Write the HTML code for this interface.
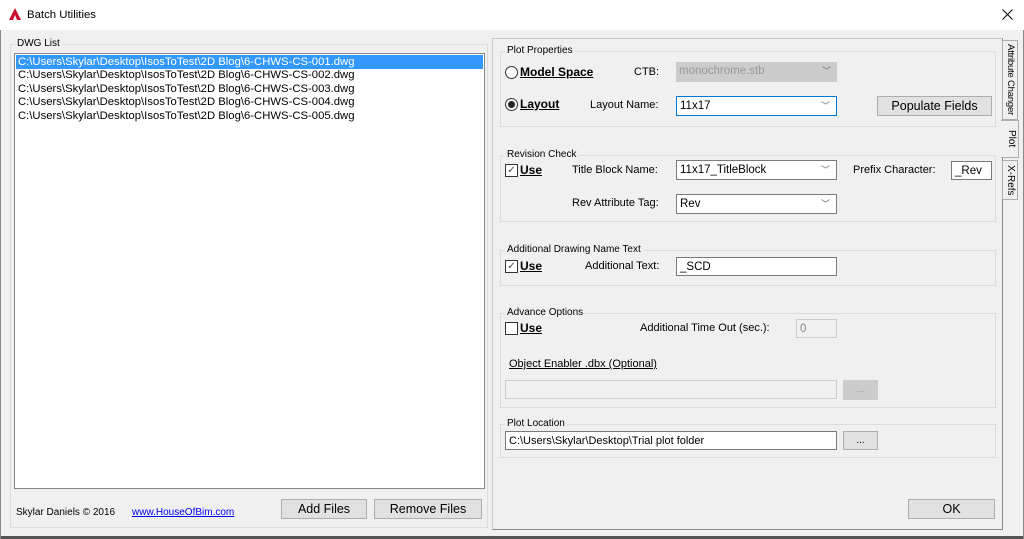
<!DOCTYPE html><html><head><style>
*{box-sizing:border-box}
body{margin:0;width:1024px;height:539px;overflow:hidden;background:#f0f0f0;font-family:"Liberation Sans",sans-serif;font-size:11px;color:#000;position:relative}
.a{position:absolute;white-space:nowrap}
.grp{position:absolute;border:1px solid #dcdcdc}
.gl{position:absolute;background:#f0f0f0;padding:0 2px;font-size:10px;top:-7px;left:4px;white-space:nowrap}
.box{position:absolute;background:#fff;border:1px solid #7a7a7a;padding:1px 3px;line-height:16px;font-size:11.5px;white-space:nowrap}
.dis{background:#f0f0f0;border-color:#ccc;color:#888}
.btn{position:absolute;background:#e1e1e1;border:1px solid #adadad;text-align:center;font-size:12.5px;line-height:18px}
.ch{position:absolute;right:6px;top:1px;font-size:9px;color:#666}
.cb{position:absolute;width:13px;height:13px;border:1px solid #333;background:#fff;font-size:10px;line-height:11px;text-align:center;color:#444}
.rd{position:absolute;width:13px;height:13px;border:1px solid #333;border-radius:50%;background:#fff}
b{text-decoration:underline;font-size:12px}
.tab{position:absolute;writing-mode:vertical-rl;border:1px solid #adadad;background:#f0f0f0;font-size:10px;text-align:center;white-space:nowrap;line-height:14px;overflow:hidden}
</style></head><body>
<div class="a" style="left:0;top:0;width:1024px;height:30px;background:#fff"></div>
<svg class="a" style="left:8px;top:7px" width="14" height="14"><polygon points="7,1 13,13 9,13 7,8 5,13 1,13" fill="#c8102e"/></svg>
<div class="a" style="left:27px;top:9px;font-size:11.4px">Batch Utilities</div>
<svg class="a" style="left:1002px;top:9px" width="11" height="11"><path d="M0.5 0.5L10.5 10.5M10.5 0.5L0.5 10.5" stroke="#111" stroke-width="1.1"/></svg>
<div class="a" style="left:0;top:536px;width:1024px;height:3px;background:#555"></div>
<div class="a" style="left:0;top:30px;width:1px;height:509px;background:#888"></div>
<div class="a" style="left:1023px;top:30px;width:1px;height:509px;background:#888"></div>

<div class="grp" style="left:10px;top:44px;width:478px;height:484px"><span class="gl">DWG List</span></div>
<div class="a" style="left:14px;top:53px;width:471px;height:436px;background:#fff;border:1px solid #828790"></div>
<div class="a" style="left:16px;top:55px;width:467px;height:14px;background:#3399ff"></div>
<div class="a" style="left:18px;top:55.5px;line-height:13.6px;font-size:11.3px"><span style="color:#fff">C:\Users\Skylar\Desktop\IsosToTest\2D Blog\6-CHWS-CS-001.dwg</span><br>C:\Users\Skylar\Desktop\IsosToTest\2D Blog\6-CHWS-CS-002.dwg<br>C:\Users\Skylar\Desktop\IsosToTest\2D Blog\6-CHWS-CS-003.dwg<br>C:\Users\Skylar\Desktop\IsosToTest\2D Blog\6-CHWS-CS-004.dwg<br>C:\Users\Skylar\Desktop\IsosToTest\2D Blog\6-CHWS-CS-005.dwg</div>
<div class="a" style="left:16px;top:507px;font-size:10px">Skylar Daniels © 2016</div>
<div class="a" style="left:132px;top:507px;font-size:10px;color:#0000ee;text-decoration:underline">www.HouseOfBim.com</div>
<div class="btn" style="left:281px;top:499px;width:86px;height:20px">Add Files</div>
<div class="btn" style="left:374px;top:499px;width:108px;height:20px">Remove Files</div>

<div class="a" style="left:492px;top:38px;width:511px;height:492px;border:1px solid #c8c8c8;border-right-color:#888;border-bottom-color:#888"></div>
<div class="tab" style="left:1002px;top:40px;width:16px;height:80px;font-size:9.5px;letter-spacing:-0.2px">Attribute Changer</div>
<div class="tab" style="left:1001px;top:120px;width:18px;height:38px;border-left:none">Plot</div>
<div class="tab" style="left:1002px;top:160px;width:16px;height:40px">X-Refs</div>

<div class="grp" style="left:500px;top:51px;width:496px;height:76px"><span class="gl">Plot Properties</span></div>
<div class="rd" style="left:505px;top:66px"></div>
<div class="a" style="left:520px;top:65px"><b>Model Space</b></div>
<div class="a" style="left:634px;top:66px">CTB:</div>
<div class="box dis" style="left:676px;top:62px;width:161px;height:20px;border:none;background:#ccc;color:#999">monochrome.stb<span class="ch">﹀</span></div>
<div class="rd" style="left:505px;top:98px;background:radial-gradient(#222 3px,#fff 4px)"></div>
<div class="a" style="left:520px;top:97px"><b>Layout</b></div>
<div class="a" style="left:590px;top:99px">Layout Name:</div>
<div class="box" style="left:676px;top:96px;width:161px;height:20px;border-color:#0078d7">11x17<span class="ch">﹀</span></div>
<div class="btn" style="left:877px;top:96px;width:115px;height:20px">Populate Fields</div>

<div class="grp" style="left:500px;top:155px;width:496px;height:67px"><span class="gl">Revision Check</span></div>
<div class="cb" style="left:505px;top:164px">✓</div>
<div class="a" style="left:520px;top:163px"><b>Use</b></div>
<div class="a" style="left:572px;top:164px">Title Block Name:</div>
<div class="box" style="left:676px;top:160px;width:161px;height:20px">11x17_TitleBlock<span class="ch">﹀</span></div>
<div class="a" style="left:853px;top:164px">Prefix Character:</div>
<div class="box" style="left:951px;top:161px;width:41px;height:19px">_Rev</div>
<div class="a" style="left:572px;top:197px">Rev Attribute Tag:</div>
<div class="box" style="left:676px;top:194px;width:161px;height:20px">Rev<span class="ch">﹀</span></div>

<div class="grp" style="left:500px;top:250px;width:496px;height:36px"><span class="gl">Additional Drawing Name Text</span></div>
<div class="cb" style="left:505px;top:260px">✓</div>
<div class="a" style="left:520px;top:259px"><b>Use</b></div>
<div class="a" style="left:585px;top:260px">Additional Text:</div>
<div class="box" style="left:676px;top:257px;width:161px;height:19px">_SCD</div>

<div class="grp" style="left:500px;top:313px;width:496px;height:95px"><span class="gl">Advance Options</span></div>
<div class="cb" style="left:505px;top:322px"></div>
<div class="a" style="left:520px;top:321px"><b>Use</b></div>
<div class="a" style="left:640px;top:322px">Additional Time Out (sec.):</div>
<div class="box dis" style="left:796px;top:319px;width:41px;height:19px">0</div>
<div class="a" style="left:509px;top:358px;text-decoration:underline">Object Enabler .dbx (Optional)</div>
<div class="box dis" style="left:505px;top:380px;width:332px;height:19px"></div>
<div class="btn" style="left:843px;top:380px;width:35px;height:20px;background:#ccc;border-color:#ccc;color:#999;font-size:10px">...</div>

<div class="grp" style="left:500px;top:424px;width:496px;height:34px"><span class="gl">Plot Location</span></div>
<div class="box" style="left:505px;top:431px;width:332px;height:19px;font-size:11px">C:\Users\Skylar\Desktop\Trial plot folder</div>
<div class="btn" style="left:843px;top:431px;width:35px;height:19px;font-size:10px">...</div>
<div class="btn" style="left:908px;top:499px;width:87px;height:20px">OK</div>
</body></html>
